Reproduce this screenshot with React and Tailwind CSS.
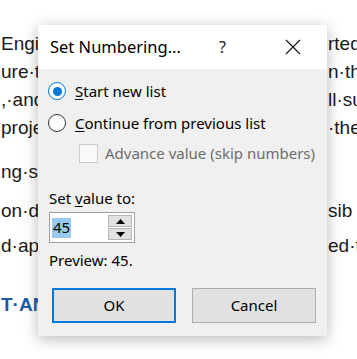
import React from 'react';

const lines = [
  { left: 'Engineering·team', right: 'rted', mt: 'mt-0' },
  { left: 'ure·that·the', right: 'n·the', mt: 'mt-0' },
  { left: ',·and·we·will', right: 'll·su', mt: 'mt-0' },
  { left: 'project·the', right: '·the', mt: 'mt-0' },
  { left: 'ng·started', right: '', mt: 'mt-[16px]' },
  { left: 'on·designs', right: 'sib', mt: 'mt-[11px]' },
  { left: 'd·approach', right: 'ed·t', mt: 'mt-[7px]' },
];

const Radio = ({ checked }) => (
  <span
    className={`w-[18px] h-[18px] rounded-full bg-white flex items-center justify-center shrink-0 border-[1.5px] ${
      checked ? 'border-[#0078d7]' : 'border-[#333333]'
    }`}
  >
    {checked && <span className="w-[9px] h-[9px] rounded-full bg-[#0078d7]" />}
  </span>
);

function Dialog() {
  return (
    <div className="absolute left-[38px] top-[25px] w-[289px] h-[311px] flex flex-col bg-[#f0f0f0] shadow-[0_3px_14px_rgba(0,0,0,0.28)] font-['Noto_Sans',sans-serif] text-[#000]">
      {/* Title */}
      <div className="h-[44px] bg-white flex items-center pl-[12px] shrink-0">
        <span className="text-[16.5px] w-[169px]">Set Numbering...</span>
        <span className="text-[16px] text-[#222]">?</span>
        <svg className="ml-[59px]" width="16" height="16" viewBox="0 0 16 16">
          <path d="M1 1 L15 15 M15 1 L1 15" stroke="#111" strokeWidth="1.1" fill="none" />
        </svg>
      </div>

      {/* Body */}
      <div className="flex flex-col pl-[10px] pt-[6px] text-[15px]">
        <div className="h-[32px] flex items-center gap-[9px]">
          <Radio checked />
          <span><u className="underline-offset-2">S</u>tart new list</span>
        </div>
        <div className="h-[32px] flex items-center gap-[9px]">
          <Radio />
          <span><u className="underline-offset-2">C</u>ontinue from previous list</span>
        </div>
        <div className="h-[29px] flex items-center gap-[7px] pl-[31px]">
          <span className="w-[19px] h-[19px] border border-[#cccccc] bg-[#f9f9f9] shrink-0" />
          <span className="text-[#6d6d6d]">Advance value (skip numbers)</span>
        </div>

        <div className="mt-[18px] h-[24px] flex items-center pl-[1px]">
          <span>Set <u className="underline-offset-2">v</u>alue to:</span>
        </div>
        <div className="mt-[2px] ml-[1px] w-[86px] h-[31px] border border-[#a0a0a0] bg-white flex items-center pl-[2px] pr-[2px]">
          <span className="bg-[#99c9ef] h-[20px] px-[1px] flex items-center leading-none">45</span>
          <div className="ml-auto flex flex-col w-[24px] h-[25px] gap-[1px]">
            <div className="flex-1 bg-[#e1e1e1] border border-[#b5b5b5] flex items-center justify-center">
              <svg width="9" height="5" viewBox="0 0 9 5"><path d="M0 5 L4.5 0 L9 5 Z" fill="#000" /></svg>
            </div>
            <div className="flex-1 bg-[#e1e1e1] border border-[#b5b5b5] flex items-center justify-center">
              <svg width="9" height="5" viewBox="0 0 9 5"><path d="M0 0 L4.5 5 L9 0 Z" fill="#000" /></svg>
            </div>
          </div>
        </div>
        <div className="mt-[5px] h-[24px] flex items-center pl-[1px]">Preview: 45.</div>

        <div className="mt-[16px] flex gap-[16px] pl-[4px]">
          <button className="w-[124px] h-[35px] bg-[#e1e1e1] border-2 border-[#0078d7] flex items-center justify-center">OK</button>
          <button className="w-[124px] h-[35px] bg-[#e1e1e1] border border-[#adadad] flex items-center justify-center">Cancel</button>
        </div>
      </div>
    </div>
  );
}

export default function App() {
  return (
    <div className="relative w-[357px] h-[359px] overflow-hidden bg-white">
      <div className="pt-[30px] font-['Liberation_Sans',Arial,sans-serif] text-[19px] text-[#1a1a1a] leading-[28px]">
        {lines.map((l, i) => (
          <div key={i} className={`flex whitespace-nowrap ${l.mt}`}>
            <span className="w-[328px] shrink-0 overflow-hidden pl-[1px]">{l.left}</span>
            <span>{l.right}</span>
          </div>
        ))}
        <div className="mt-[31px] font-bold text-[#1f5aa8] whitespace-nowrap pl-[1px]">T·AND·SCOPE</div>
      </div>
      <Dialog />
    </div>
  );
}
